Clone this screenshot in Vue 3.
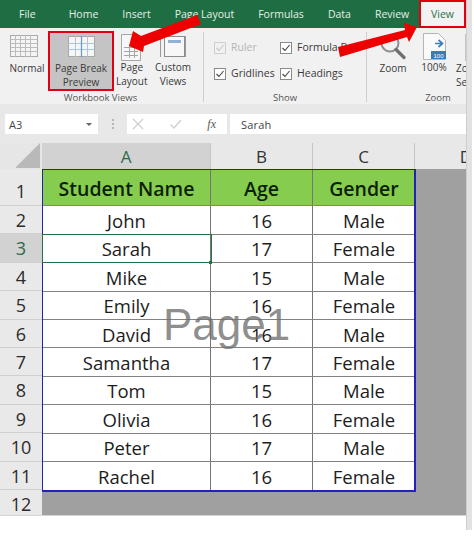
<script setup>
const tabs = ['File', 'Home', 'Insert', 'Page Layout', 'Formulas', 'Data', 'Review', 'View']
const cols = ['A', 'B', 'C', 'D']
const rows = [
  ['Student Name', 'Age', 'Gender'],
  ['John', '16', 'Male'],
  ['Sarah', '17', 'Female'],
  ['Mike', '15', 'Male'],
  ['Emily', '16', 'Female'],
  ['David', '16', 'Male'],
  ['Samantha', '17', 'Female'],
  ['Tom', '15', 'Male'],
  ['Olivia', '16', 'Female'],
  ['Peter', '17', 'Male'],
  ['Rachel', '16', 'Female']
]
const rowNums = Array.from({ length: 12 }, (_, i) => i + 1)
</script>

<template>
  <div class="page">
    <div class="app">
      <nav class="tabs">
        <span v-for="t in tabs" :key="t" class="tab" :class="{ active: t === 'View' }">{{ t }}</span>
      </nav>

      <section class="ribbon">
        <div class="group wb">
          <div class="group-body">
            <div class="rb norm">
              <svg width="28" height="22" viewBox="0 0 28 22"><rect x=".5" y=".5" width="27" height="21" fill="#f4f4f4" stroke="#aaa"/><path d="M.5 4.5h27M.5 8.5h27M.5 12.5h27M.5 16.5h27M5.5 0v22M10.5 0v22M15.5 0v22M20.5 0v22" stroke="#bcbcbc" fill="none"/></svg>
              <span>Normal</span>
            </div>
            <div class="rb pbp">
              <svg width="27" height="21" viewBox="0 0 27 21"><rect x=".5" y=".5" width="26" height="20" fill="#f6f6f6" stroke="#a9a9a9"/><path d="M.5 7.5h26M.5 13.5h26M7.5 0v21M19.5 0v21" stroke="#a9c7e2" fill="none"/><path d="M13.5 0v21" stroke="#5b9bd5" stroke-width="1.2"/></svg>
              <span>Page Break<br>Preview</span>
            </div>
            <div class="rb pl">
              <svg width="20" height="27" viewBox="0 0 20 27"><path d="M.5.5h13l6 6v20H.5z" fill="#f7f7f7" stroke="#a6a6a6"/><path d="M3 13.5h14M3 17.5h14M3 21.5h14M8.5 11v13M13.5 11v13" stroke="#a6a6a6" fill="none"/></svg>
              <span>Page<br>Layout</span>
            </div>
            <div class="rb cv">
              <svg width="26" height="23" viewBox="0 0 26 23"><path d="M.5 1v21" stroke="#999"/><rect x="4.5" y="1.5" width="20" height="20" fill="#f7f7f7" stroke="#8c8c8c"/><rect x="8" y="5" width="13" height="3" fill="#8fb2d6"/><path d="M25.5 1v21" stroke="#999"/></svg>
              <span>Custom<br>Views</span>
            </div>
          </div>
          <div class="group-label">Workbook Views</div>
        </div>

        <div class="group show">
          <div class="checks">
            <div class="checks-col">
              <label class="chk off"><i class="box"><svg width="10" height="10" viewBox="0 0 10 10"><path d="M1.5 5l2.5 2.5 4.5-5.5" fill="none" stroke="currentColor" stroke-width="1.1"/></svg></i>Ruler</label>
              <label class="chk"><i class="box"><svg width="10" height="10" viewBox="0 0 10 10"><path d="M1.5 5l2.5 2.5 4.5-5.5" fill="none" stroke="currentColor" stroke-width="1.1"/></svg></i>Gridlines</label>
            </div>
            <div class="checks-col">
              <label class="chk"><i class="box"><svg width="10" height="10" viewBox="0 0 10 10"><path d="M1.5 5l2.5 2.5 4.5-5.5" fill="none" stroke="currentColor" stroke-width="1.1"/></svg></i>Formula Bar</label>
              <label class="chk"><i class="box"><svg width="10" height="10" viewBox="0 0 10 10"><path d="M1.5 5l2.5 2.5 4.5-5.5" fill="none" stroke="currentColor" stroke-width="1.1"/></svg></i>Headings</label>
            </div>
          </div>
          <div class="group-label">Show</div>
        </div>

        <div class="group zoom">
          <div class="group-body">
            <div class="rb zm">
              <svg width="28" height="26" viewBox="0 0 28 26"><circle cx="11" cy="8" r="8.5" fill="none" stroke="#8f8f8f" stroke-width="2"/><path d="M17 14.5l8 8" stroke="#6f6f6f" stroke-width="3.2" stroke-linecap="round"/></svg>
              <span>Zoom</span>
            </div>
            <div class="rb hundred">
              <svg width="25" height="27" viewBox="0 0 25 27"><path d="M1.5.5h15l7 7v19h-22z" fill="#fafafa" stroke="#b5b5b5"/><path d="M13 10.5h7M16.5 7l4 3.5-4 3.5" fill="none" stroke="#3f7fc1" stroke-width="1.7"/><rect x="9" y="18" width="15" height="8" fill="#3f78b8"/><text x="16.5" y="24.6" class="mini">100</text></svg>
              <span>100%</span>
            </div>
            <div class="rb zsel">
              <i class="zsel-icon"></i>
              <span>Zoom to<br>Selection</span>
            </div>
          </div>
          <div class="group-label zl">Zoom</div>
        </div>
      </section>

      <section class="fbar">
        <div class="namebox"><span>A3</span><i class="caret"></i></div>
        <div class="dots"><i></i><i></i><i></i></div>
        <div class="fx">
          <svg width="12" height="12" viewBox="0 0 12 12"><path d="M1 1l10 10M11 1L1 11" stroke="#cfcfcf" stroke-width="1.3"/></svg>
          <svg width="13" height="12" viewBox="0 0 13 12"><path d="M1.5 6.5l3.5 3.5 7-8" fill="none" stroke="#cfcfcf" stroke-width="1.3"/></svg>
          <em>fx</em>
        </div>
        <div class="input">Sarah</div>
      </section>

      <section class="sheet">
        <div class="head-row">
          <div class="corner"><svg width="26" height="26" viewBox="0 0 26 26"><path d="M25 0v25H0z" fill="#b9b9b9" transform="translate(-1 0)"/></svg></div>
          <div v-for="c in cols" :key="c" class="col" :class="['col-' + c, { cur: c === 'A' }]">{{ c }}</div>
        </div>
        <div class="body">
          <div class="row-heads">
            <div v-for="n in rowNums" :key="n" class="rh" :class="{ first: n === 1, cur: n === 3, last: n === 12 }">{{ n }}</div>
          </div>
          <div class="canvas">
            <div class="table">
              <div v-for="(r, i) in rows" :key="i" class="tr" :class="{ hdr: i === 0 }">
                <div v-for="(v, j) in r" :key="j" class="td" :class="['c' + j, { picked: i === 2 && j === 0 }]">{{ v }}</div>
              </div>
            </div>
            <div class="watermark">Page1</div>
          </div>
        </div>
      </section>

      <svg class="arrows" width="467" height="70" viewBox="0 0 467 70">
        <path d="M197 15L141 36 133 31 129 46 143 52 144 46 201 24z" fill="#ee0000"/>
        <path d="M338 47L405 30 404 23 417 27 409 42 407 37 340 57z" fill="#ee0000"/>
      </svg>
    </div>
    <div class="strip"></div>
  </div>
</template>

<style>
html, body { margin: 0; background: #fff; }
</style>

<style scoped>
.page {
  position: relative;
  width: 474px;
  height: 537px;
  display: flex;
  align-items: flex-start;
  background: #fff;
  overflow: hidden;
  font-family: "Open Sans", "Noto Sans", sans-serif;
  color: #222;
}
.app {
  position: relative;
  width: 466px;
  height: 516px;
  flex: none;
  overflow: hidden;
  background: #e6e6e6;
  border-bottom: 1px solid #d4d4d4;
  box-sizing: border-box;
}
.strip {
  width: 6px;
  height: 530px;
  background: #e2e2e2;
  border-left: 1px solid #cfcfcf;
  box-sizing: border-box;
  flex: none;
}
.tabs {
  height: 28px;
  background: #1f6e43;
  display: flex;
  align-items: center;
  gap: 24px;
  padding-left: 19px;
  color: #e4efe8;
  font-size: 10.5px;
  position: relative;
}
.tab:first-child { margin-right: 9px; }
.tab.active {
  position: absolute;
  left: 419px;
  top: 0;
  width: 47px;
  height: 28px;
  box-sizing: border-box;
  border: 2px solid #e00010;
  background: #f2f2f2;
  color: #2f6f4b;
  display: flex;
  align-items: center;
  justify-content: center;
}
.ribbon {
  height: 76px;
  background: #f1f1f1;
  display: flex;
  font-size: 10px;
  color: #3a3a3a;
}
.group {
  position: relative;
  box-sizing: border-box;
  border-right: 1px solid #cfcfcf;
  margin-bottom: 2px;
  margin-top: 4px;
  flex: none;
}
.group.wb { width: 204px; }
.group.show { width: 163px; }
.group.zoom { width: 100px; border-right: 0; }
.group-label {
  position: absolute;
  left: 0;
  right: 0;
  bottom: -2px;
  text-align: center;
  color: #555;
  font-size: 9.5px;
  line-height: 12px;
}
.group.wb .group-label { right: 2px; }
.group.zoom .group-label { left: 42px; }
.group-body { display: flex; }
.rb {
  display: flex;
  flex-direction: column;
  align-items: center;
  flex: none;
  line-height: 14px;
  text-align: center;
}
.rb svg { display: block; flex: none; }
.norm { width: 46px; padding: 3px 0 0 2px; box-sizing: border-box; }
.norm span { margin-top: 4px; margin-left: 6px; }
.pbp {
  margin-left: 2px;
  width: 66px;
  height: 60px;
  margin-top: -1px;
  box-sizing: border-box;
  border: 2px solid #e00010;
  background: #c4c4c4;
  padding-top: 3px;
}
.pbp span { margin-top: 4px; white-space: nowrap; }
.pl { width: 36px; padding-top: 2px; align-items: flex-start; padding-left: 6px; }
.pl svg { margin-left: 1px; }
.pl span { margin-top: -1px; margin-left: -4px; }
.cv { width: 46px; padding-top: 3px; margin-left: -6px; }
.cv span { margin-top: 2px; }
.checks { display: flex; padding-left: 10px; }
.checks-col { display: flex; flex-direction: column; gap: 13px; padding-top: 9px; }
.checks-col:first-child { width: 66px; }
.chk { display: flex; align-items: center; gap: 5px; line-height: 13px; white-space: nowrap; font-size: 10.5px; }
.chk.off { color: #b5b5b5; }
.box {
  width: 12px;
  height: 12px;
  box-sizing: border-box;
  border: 1px solid #8a8a8a;
  background: #fff;
  display: flex;
  align-items: center;
  justify-content: center;
  color: #444;
  flex: none;
}
.chk.off .box { border-color: #cfcfcf; background: #f1f1f1; color: #c4c4c4; }
.zm { width: 46px; padding: 3px 0 0 6px; box-sizing: border-box; }
.hundred { width: 36px; padding-top: 1px; margin-left: 3px; }
.mini { font: 6px "Liberation Sans", sans-serif; fill: #fff; text-anchor: middle; }
.zsel { margin-left: 4px; text-align: left; align-items: flex-start; white-space: nowrap; padding-top: 2px; }
.zsel-icon { display: block; height: 27px; width: 0; margin-left: 9px; border-left: 1px solid #c4c4c4; }
.fbar {
  height: 39px;
  display: flex;
  align-items: flex-start;
  padding: 10px 0 0 5px;
  box-sizing: border-box;
  background: #e8e8e8;
  font-size: 11px;
  color: #444;
}
.namebox, .fx, .input {
  height: 20px;
  background: #fff;
  box-sizing: border-box;
  display: flex;
  align-items: center;
  flex: none;
}
.namebox { width: 93px; padding: 0 6px 0 4px; justify-content: space-between; }
.caret { width: 0; height: 0; border: 3px solid transparent; border-top-color: #666; margin-top: 3px; }
.dots { width: 29px; flex: none; height: 20px; display: flex; flex-direction: column; align-items: center; justify-content: center; gap: 2px; }
.dots i { width: 2px; height: 2px; background: #b5b5b5; }
.fx { width: 100px; padding: 0 11px 0 5px; justify-content: space-between; }
.fx em { font: italic 12px "Liberation Serif", serif; color: #555; }
.input { width: 237px; margin-left: 3px; padding-left: 11px; letter-spacing: .2px; }
.sheet { height: 372px; }
.head-row { display: flex; height: 26px; background: #e8e8e8; }
.corner { width: 42px; flex: none; display: flex; justify-content: flex-end; background: #e6e6e6; }
.col {
  flex: none;
  text-align: center;
  font-size: 17px;
  line-height: 27px;
  color: #333;
  box-sizing: border-box;
  border-right: 1px solid #c6c6c6;
}
.col-A { width: 169px; }
.col-B { width: 102px; }
.col-C { width: 102px; }
.col-D { width: 102px; border-right: 0; }
.col.cur { background: #d2d2d2; color: #2d6a4b; }
.body { display: flex; height: 346px; }
.row-heads { width: 42px; flex: none; background: #e9e9e9; }
.rh {
  height: 28.4px;
  box-sizing: border-box;
  text-align: center;
  font-size: 18px;
  line-height: 29px;
  color: #2b2b2b;
  border-bottom: 1px solid #cfcfcf;
}
.rh.first { height: 37px; line-height: 44px; }
.rh.cur { background: #d2d2d2; color: #2d6a4b; }
.rh.last { height: 25px; border-bottom: 0; }
.canvas {
  position: relative;
  flex: 1;
  background: #a0a0a0;
}
.table {
  width: 374px;
  box-sizing: border-box;
  border: 2px solid #2222b8;
  border-width: 1px 2px 2px 1px;
  background: #fff;
  font-size: 18.5px;
  color: #1c1c1c;
}
.tr { display: flex; height: 28.4px; box-sizing: border-box; border-bottom: 1px solid #828282; }
.tr:last-child { border-bottom: 0; }
.tr.hdr { height: 36.4px; background: #86cc4f; font-weight: 600; font-size: 19.5px; color: #0d1f08; }
.td {
  flex: none;
  box-sizing: border-box;
  display: flex;
  align-items: center;
  justify-content: center;
  border-right: 1px solid #767676;
  position: relative;
  padding-top: 1px;
}
.c0 { width: 168px; }
.c1 { width: 102px; }
.c2 { width: 102px; border-right: 0; }
.td.picked { outline: 1px solid #217346; z-index: 1; }
.td.picked::after {
  content: "";
  position: absolute;
  right: -2px;
  bottom: -2px;
  width: 3px;
  height: 3px;
  background: #217346;
}
.watermark {
  position: absolute;
  left: 121px;
  top: 131px;
  font: 44px/50px "Liberation Sans", sans-serif;
  color: rgba(112, 112, 112, .8);
  z-index: 2;
}
.arrows { position: absolute; left: 0; top: 0; z-index: 5; pointer-events: none; }
</style>
